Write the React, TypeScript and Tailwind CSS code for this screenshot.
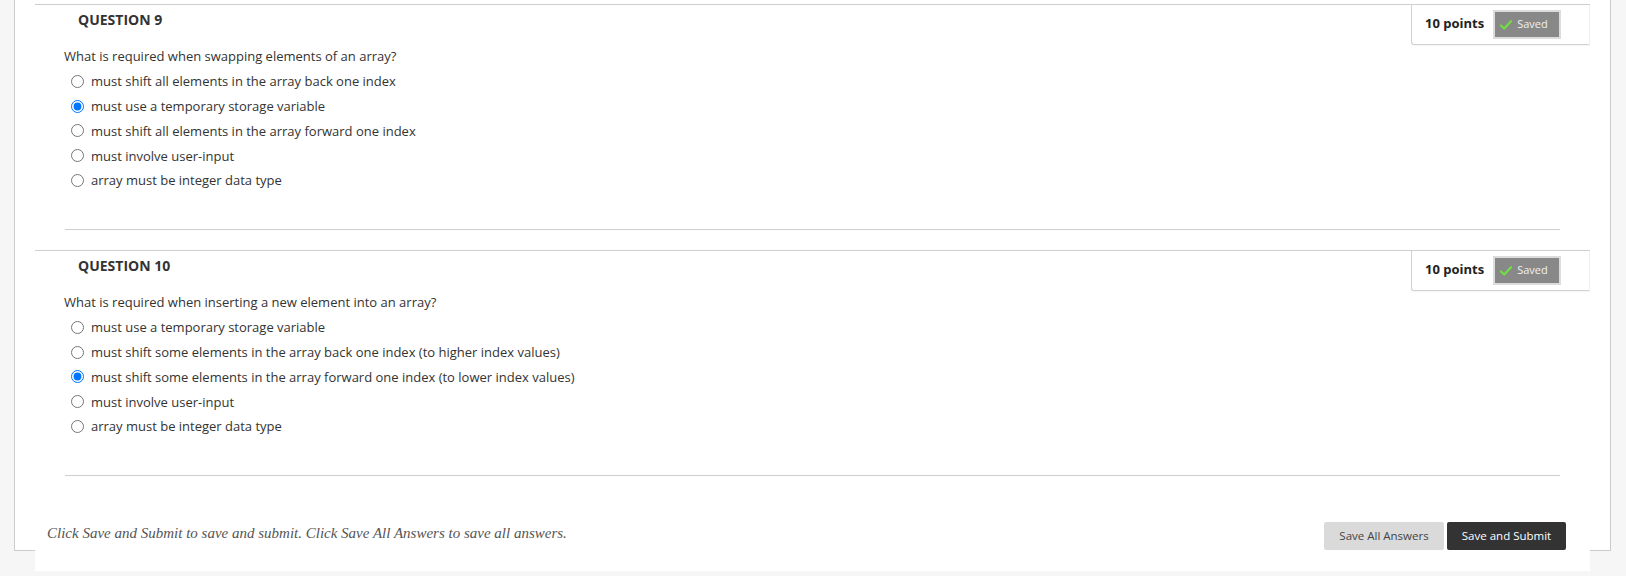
const questions = [
  {
    num: 9,
    text: "What is required when swapping elements of an array?",
    options: [
      "must shift all elements in the array back one index",
      "must use a temporary storage variable",
      "must shift all elements in the array forward one index",
      "must involve user-input",
      "array must be integer data type",
    ],
    answer: 1,
  },
  {
    num: 10,
    text: "What is required when inserting a new element into an array?",
    options: [
      "must use a temporary storage variable",
      "must shift some elements in the array back one index (to higher index values)",
      "must shift some elements in the array forward one index (to lower index values)",
      "must involve user-input",
      "array must be integer data type",
    ],
    answer: 2,
  },
];

function SavedBadge() {
  return (
    <div className="flex h-[29px] w-[68px] items-center border-2 border-[#dcdcdc] bg-[#888888] pl-[5px]">
      <svg width="12" height="10" viewBox="0 0 12 10" className="mr-[5px]">
        <path d="M1 5.5 L4.2 8.5 L11 1.2" fill="none" stroke="#6ee03f" strokeWidth="2.2" strokeLinecap="round" strokeLinejoin="round" />
      </svg>
      <span className="text-[11px] text-[#f0f0f0]">Saved</span>
    </div>
  );
}

function Question({ q }: { q: (typeof questions)[number] }) {
  return (
    <div className="h-[246px] border-t border-[#cfcfcf]">
      <div className="flex items-start justify-between">
        <h3 className="pl-[43px] pt-[6px] text-[14px] leading-[18px] font-bold text-[#333]">
          QUESTION {q.num}
        </h3>
        <div className="flex h-[40px] w-[179px] items-center rounded-bl-[3px] border-b border-l border-r border-[#d2d2d2] border-r-[#f0f0f0] pl-[13px] shadow-[0_1px_1px_rgba(0,0,0,0.04)]">
          <span className="mr-[9px] -mt-[2px] text-[13px] font-bold text-[#222]">10 points</span>
          <SavedBadge />
        </div>
      </div>
      <p className="mt-[2px] pl-[29px] text-[13px] leading-[18px] text-[#333]">{q.text}</p>
      <div className="mt-[4px] pl-[36px]">
        {q.options.map((opt, i) => (
          <label key={i} className="flex h-[24.75px] items-center">
            <input
              type="radio"
              name={`q${q.num}`}
              defaultChecked={i === q.answer}
              className="h-[13px] w-[13px] shrink-0"
            />
            <span className="ml-[7px] text-[13px] leading-[18px] text-[#333]">{opt}</span>
          </label>
        ))}
      </div>
      <div className="mt-[36px] ml-[30px] mr-[30px] border-t border-[#cfcfcf]" />
    </div>
  );
}

export default function App() {
  return (
    <div className="h-[576px] w-[1626px] overflow-hidden bg-[#f6f6f6] font-['Open_Sans',sans-serif]">
      <div className="ml-[14px] w-[1597px] border-b border-l border-r border-[#cccccc] bg-white pt-[4px]">
        <div className="ml-[20px] w-[1555px]">
          {questions.map((q) => (
            <Question key={q.num} q={q} />
          ))}
        </div>
        <div className="h-[54px]" />
      </div>
      <div className="relative z-10 -mt-[55px] ml-[35px] flex h-[75px] w-[1555px] items-center justify-between bg-white pl-[12px] pr-[24px]">
        <p className="font-['Liberation_Serif',serif] text-[15px] italic text-[#555]">
          Click Save and Submit to save and submit. Click Save All Answers to save all answers.
        </p>
        <div className="mt-[4px] flex gap-[3px]">
          <button className="h-[28px] w-[120px] rounded-[2px] bg-[#dadada] text-[11.5px] text-[#444]">
            Save All Answers
          </button>
          <button className="h-[28px] w-[119px] rounded-[2px] bg-[#333333] text-[11.5px] text-white">
            Save and Submit
          </button>
        </div>
      </div>
    </div>
  );
}
